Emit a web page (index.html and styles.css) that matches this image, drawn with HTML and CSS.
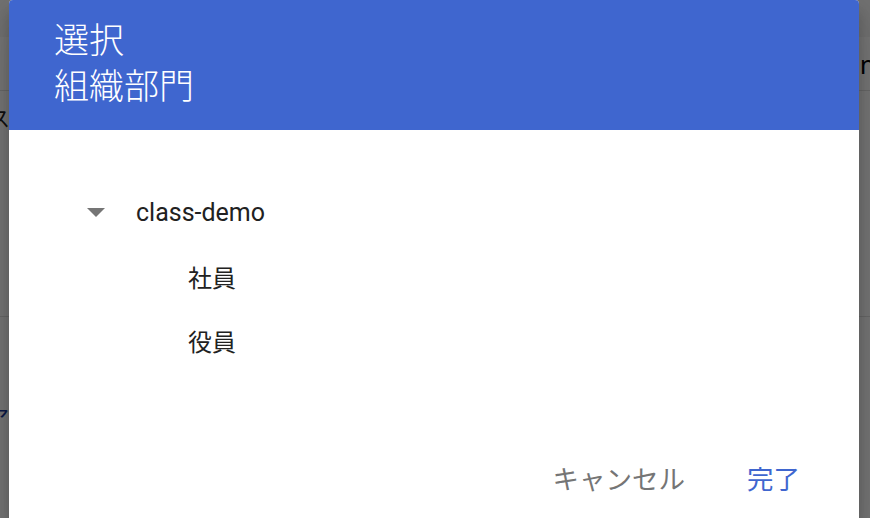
FILE: index.html
```html
<!DOCTYPE html>
<html lang="ja">
<head>
<meta charset="utf-8">
<title>選択 組織部門</title>
<link rel="stylesheet" href="styles.css">
</head>
<body>
<div class="page">
  <div class="topbar"></div>
  <div class="titlebar"><span class="team">Team</span></div>
  <div class="content">
    <div class="side-label">スタッフ</div>
    <div class="side-rule"></div>
    <div class="side-link">アカウント</div>
  </div>
</div>
<div class="scrim"></div>
<div class="dialog" role="dialog">
  <div class="dialog-header">
    <div class="dialog-title">選択</div>
    <div class="dialog-title">組織部門</div>
  </div>
  <div class="dialog-body">
    <div class="tree-row root">
      <svg class="caret" width="18" height="9" viewBox="0 0 18 9"><polygon points="0,0 18,0 9,9" fill="#757575"/></svg>
      <span class="tree-label">class-demo</span>
    </div>
    <div class="tree-row child"><span class="tree-label">社員</span></div>
    <div class="tree-row child"><span class="tree-label">役員</span></div>
  </div>
  <div class="dialog-actions">
    <span class="btn btn-cancel">キャンセル</span>
    <span class="btn btn-ok">完了</span>
  </div>
</div>
</body>
</html>
```
FILE: styles.css
```css
html, body {
  margin: 0;
  padding: 0;
  width: 870px;
  height: 518px;
  overflow: hidden;
  font-family: Roboto, "Noto Sans CJK JP", sans-serif;
}
.page {
  position: relative;
  width: 870px;
  height: 518px;
  background: #ffffff;
  display: flex;
  flex-direction: column;
  overflow: hidden;
}
.topbar {
  height: 37px;
  background: #f4f4f4;
}
.titlebar {
  height: 53px;
  border-bottom: 1px solid #e0e0e0;
  display: flex;
  align-items: center;
  justify-content: flex-end;
  margin-right: -14px;
}
.team {
  font-size: 26px;
  color: #000;
  font-family: "Noto Sans", sans-serif;
}
.content {
  display: flex;
  flex-direction: column;
}
.side-label {
  margin-left: -11px;
  margin-top: 14px;
  font-size: 21px;
  line-height: 24px;
  color: #222;
  font-family: "Noto Sans CJK JP", sans-serif;
}
.side-rule {
  margin-top: 187px;
  height: 1px;
  background: #e0e0e0;
}
.side-link {
  margin-top: 84px;
  margin-left: -12px;
  font-size: 21px;
  color: #1a3a9a;
  font-family: "Noto Sans CJK JP", sans-serif;
}
.scrim {
  position: absolute;
  inset: 0;
  background: rgba(0, 0, 0, 0.54);
}
.dialog {
  position: absolute;
  left: 9px;
  top: 0;
  width: 850px;
  height: 518px;
  background: #ffffff;
  border-radius: 4px 4px 0 0;
  overflow: hidden;
  box-shadow: 0 11px 15px rgba(0,0,0,0.2), 0 24px 38px rgba(0,0,0,0.14);
}
.dialog-header {
  height: 130px;
  box-sizing: border-box;
  background: #3f66cf;
  padding: 15px 0 0 45px;
}
.dialog-title {
  color: #ffffff;
  font-family: "Noto Sans CJK JP", sans-serif;
  font-size: 35px;
  line-height: 46px;
  font-weight: 300;
}
.dialog-body {
  padding-top: 50px;
  display: flex;
  flex-direction: column;
}
.tree-row {
  height: 64px;
  display: flex;
  align-items: center;
  font-size: 25px;
  color: #212121;
}
.tree-row.root {
  padding-left: 78px;
  gap: 31px;
}
.tree-row.child {
  padding-left: 179px;
  font-family: "Noto Sans CJK JP", sans-serif;
  font-size: 24px;
}
.caret {
  display: block;
}
.dialog-actions {
  margin-top: 86px;
  display: flex;
  justify-content: flex-end;
  align-items: center;
  gap: 62px;
  padding-right: 59px;
  height: 40px;
}
.btn {
  font-family: "Noto Sans CJK JP", sans-serif;
  font-size: 26.5px;
  line-height: 40px;
}
.btn-cancel {
  color: #757575;
}
.btn-ok {
  color: #3f66cf;
}
```
